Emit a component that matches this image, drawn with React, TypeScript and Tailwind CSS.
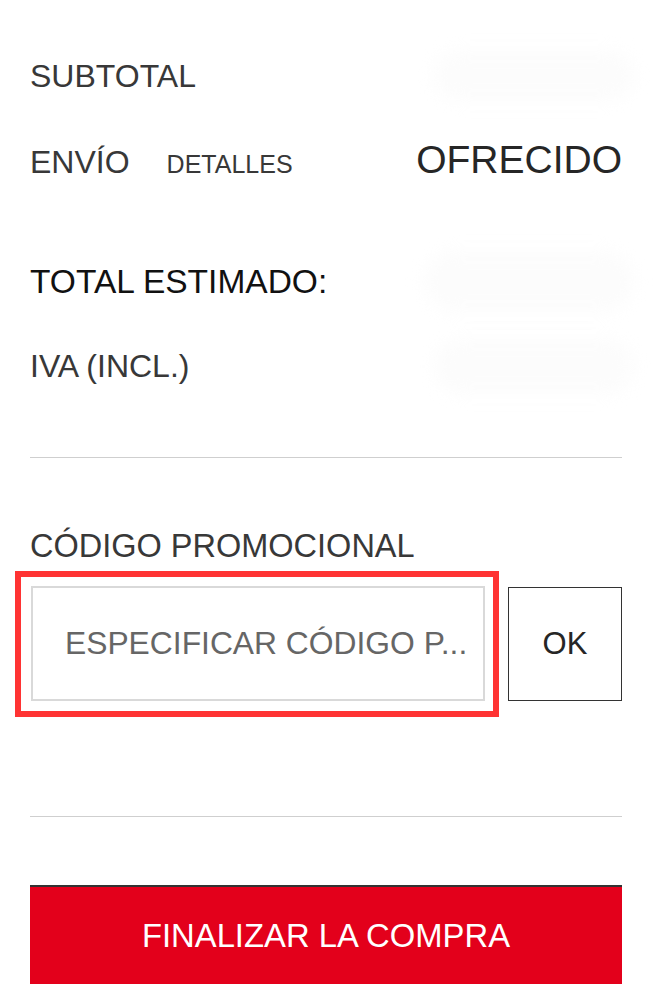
import React from 'react'

const font = { fontFamily: '"Liberation Sans", Arial, sans-serif' }

function Blob({ className }: { className: string }) {
  return <div className={`rounded-full bg-[#fcfcfc] blur-sm ${className}`} />
}

export default function App() {
  return (
    <div style={font} className="w-[664px] h-[1000px] bg-white overflow-hidden">
      <div className="flex flex-col px-[30px] w-[652px] pt-[60px]">
        {/* Subtotal */}
        <div className="flex h-[32px] items-center justify-between">
          <span className="text-[32px] leading-[32px] text-[#383838]">SUBTOTAL</span>
          <Blob className="w-[200px] h-[50px] -mr-[12px]" />
        </div>

        {/* Envio */}
        <div className="mt-[52px] flex h-[32px] items-baseline">
          <span className="text-[32px] leading-[32px] text-[#383838]">ENVÍO</span>
          <span className="ml-[37px] text-[25px] leading-[32px] text-[#383838]">DETALLES</span>
          <span className="ml-auto text-[39px] leading-[32px] text-[#262626]">OFRECIDO</span>
        </div>

        {/* Total */}
        <div className="mt-[90px] flex h-[32px] items-center justify-between">
          <span className="text-[33.5px] leading-[32px] text-[#111]">TOTAL ESTIMADO:</span>
          <Blob className="w-[210px] h-[60px] -mr-[12px]" />
        </div>

        {/* IVA */}
        <div className="mt-[52px] flex h-[32px] items-center justify-between">
          <span className="text-[32px] leading-[32px] text-[#383838]">IVA (INCL.)</span>
          <Blob className="w-[200px] h-[55px] -mr-[12px]" />
        </div>

        <div className="mt-[75px] h-px bg-[#cfcfcf]" />

        {/* Promo code */}
        <div className="mt-[72px] h-[32px] text-[32.5px] leading-[32px] text-[#383838]">
          CÓDIGO PROMOCIONAL
        </div>

        <div className="mt-[9px] -ml-[15px] flex items-start">
          <div className="w-[484px] border-[6px] border-[#ff3333] pt-[9px] pb-[10px] pl-[10px] pr-[8px]">
            <div className="w-[454px] h-[115px] border-2 border-[#d9d9d9] flex items-center pl-[32px] pr-[12px]">
              <span className="truncate text-[31.8px] text-[#666]">ESPECIFICAR CÓDIGO P...</span>
            </div>
          </div>
          <button className="mt-[16px] ml-[9px] w-[114px] h-[114px] border-[1.5px] border-[#333] flex items-center justify-center text-[31px] text-[#262626]">
            OK
          </button>
        </div>

        <div className="mt-[99px] h-px bg-[#cfcfcf]" />

        <button className="mt-[68px] h-[99px] w-full bg-[#e3001b] border-t-2 border-[#333] flex items-center justify-center text-[32.8px] text-white">
          FINALIZAR LA COMPRA
        </button>
      </div>
    </div>
  )
}
